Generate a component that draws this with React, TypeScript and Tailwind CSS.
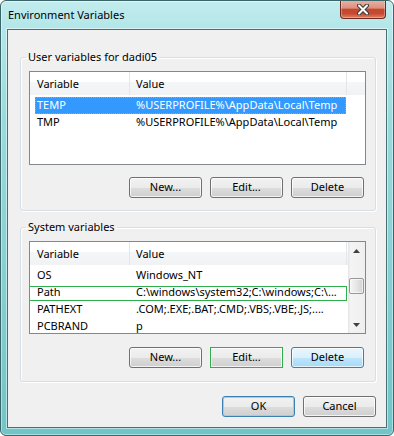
import React from "react";

type Row = { name: string; value: string; selected?: boolean; marked?: boolean };

const userRows: Row[] = [
  { name: "TEMP", value: "%USERPROFILE%\\AppData\\Local\\Temp", selected: true },
  { name: "TMP", value: "%USERPROFILE%\\AppData\\Local\\Temp" },
];

const systemRows: Row[] = [
  { name: "OS", value: "Windows_NT" },
  { name: "Path", value: "C:\\windows\\system32;C:\\windows;C:\\...", marked: true },
  { name: "PATHEXT", value: ".COM;.EXE;.BAT;.CMD;.VBS;.VBE;.JS;...." },
  { name: "PCBRAND", value: "p" },
];

const gray = "bg-[linear-gradient(to_bottom,#f2f2f2_0%,#ebebeb_50%,#dddddd_50%,#cfcfcf_100%)]";

const buttonKinds = {
  normal: `border-[#707070] ${gray} shadow-[inset_0_0_0_1px_rgba(255,255,255,0.75)]`,
  hover:
    "border-[#3c7fb1] bg-[linear-gradient(to_bottom,#eaf6fd_0%,#d9f0fc_50%,#bee6fd_50%,#a7d9f5_100%)] shadow-[inset_0_0_0_1px_rgba(255,255,255,0.7)]",
  primary: `border-[#3c7fb1] ${gray} shadow-[inset_0_0_0_1px_#7fdcf7]`,
  marked: `rounded-none border-[#2faf4c] ${gray} shadow-[inset_0_0_0_1px_rgba(255,255,255,0.75)]`,
};

function Button({ label, kind = "normal" }: { label: string; kind?: keyof typeof buttonKinds }) {
  return (
    <div
      className={`flex h-[21px] w-[73px] items-center justify-center rounded-[3px] border text-black ${buttonKinds[kind]}`}
    >
      {label}
    </div>
  );
}

function ScrollBar() {
  return (
    <div className="flex w-[17px] shrink-0 flex-col bg-[linear-gradient(to_right,#e4e4e4_0%,#f4f4f4_15%,#efefef_100%)]">
      <div className="flex h-[17px] items-center justify-center">
        <svg width="7" height="4" viewBox="0 0 7 4">
          <path d="M3.5 0 L7 4 L0 4 Z" fill="#404040" />
        </svg>
      </div>
      <div className="flex-1">
        <div className="mx-px mt-[19px] h-[16px] rounded-[2px] border border-[#979797] bg-[linear-gradient(to_right,#f6f6f6_0%,#e6e6e6_50%,#d2d2d2_100%)] shadow-[inset_0_0_0_1px_rgba(255,255,255,0.6)]" />
      </div>
      <div className="flex h-[17px] items-center justify-center">
        <svg width="7" height="4" viewBox="0 0 7 4">
          <path d="M0 0 L7 0 L3.5 4 Z" fill="#404040" />
        </svg>
      </div>
    </div>
  );
}

function ListView({ rows, scroll, h }: { rows: Row[]; scroll?: boolean; h: string }) {
  return (
    <div className={`ml-[3px] mt-[7px] flex w-[337px] border border-[#828790] bg-white ${h}`}>
      <div className="flex min-w-0 flex-1 flex-col overflow-hidden">
        <div className="flex h-[23px] shrink-0 bg-[linear-gradient(to_bottom,#ffffff_0%,#ffffff_45%,#f5f6f7_45%,#f1f2f4_100%)]">
          <div className="flex w-[100px] shrink-0 items-center border-r border-[#e3e6ea] pl-[7px] pt-[2px]">
            Variable
          </div>
          <div className="flex w-[217px] shrink-0 items-center border-r border-[#e3e6ea] pl-[6px] pt-[2px]">
            Value
          </div>
          <div className="flex-1" />
        </div>
        <div className="pt-[2px]">
          {rows.map((r) => (
            <div
              key={r.name}
              className={`relative ml-[5px] flex h-[17px] w-[311px] items-center border ${
                r.selected ? "border-dotted border-[#d9994a] bg-[#3399ff] text-white" : "border-transparent text-black"
              }`}
            >
              <div className="w-[95px] shrink-0 pl-px">{r.name}</div>
              <div className="min-w-0 flex-1 overflow-hidden whitespace-nowrap pl-[5px]">{r.value}</div>
              {r.marked && (
                <span className="absolute left-[-7px] top-px h-[15px] w-[318px] border border-[#2faf4c]" />
              )}
            </div>
          ))}
        </div>
      </div>
      {scroll && <ScrollBar />}
    </div>
  );
}

function Group({ title, children, className }: { title: string; children: React.ReactNode; className: string }) {
  return (
    <fieldset
      className={`ml-[12px] w-[356px] rounded-[3px] border border-[#d5dfe5] px-[5px] shadow-[inset_1px_1px_0_#ffffff,1px_1px_0_#ffffff] ${className}`}
    >
      <legend className="px-[2px] leading-[14px] text-black">{title}</legend>
      {children}
    </fieldset>
  );
}

export default function App() {
  return (
    <div className="flex h-[436px] w-[394px] flex-col overflow-hidden rounded-[6px] border border-[#3b6669] bg-[linear-gradient(to_bottom,#c3ecee_0px,#b2e6e8_28px,#99dadd_120px,#82ced1_300px,#70c4c7_436px)] px-[6px] pb-[7px] font-['Noto_Sans',sans-serif] text-[11px] shadow-[inset_0_0_0_1px_rgba(255,255,255,0.45)]">
      <div className="flex h-[28px] shrink-0">
        <div className="pl-px pt-[7px] leading-[14px] text-black">Environment Variables</div>
        <div className="ml-auto mr-px -mt-px flex h-[19px] w-[46px] items-center justify-center rounded-b-[4px] border border-t-0 border-[#6b2a20] bg-[linear-gradient(to_bottom,#ebb3a5_0%,#dc907e_45%,#c5472f_52%,#c54a31_75%,#e0805f_100%)] shadow-[inset_0_0_0_1px_rgba(255,255,255,0.3)]">
          <svg width="12" height="11" viewBox="0 0 12 11">
            <path d="M2 1.5 L10 9.5 M10 1.5 L2 9.5" stroke="#3c3c3c" strokeWidth="4" strokeLinecap="round" />
            <path d="M2 1.5 L10 9.5 M10 1.5 L2 9.5" stroke="#ffffff" strokeWidth="2" strokeLinecap="round" />
          </svg>
        </div>
      </div>

      <div className="flex flex-1 flex-col border border-[#4a6f72] bg-[#f0f0f0] shadow-[0_0_0_1px_rgba(255,255,255,0.5)]">
        <Group title="User variables for dadi05" className="mt-[20px] pb-[12px]">
          <ListView rows={userRows} h="h-[94px]" />
          <div className="mt-[12px] flex justify-end gap-[8px] pr-[6px]">
            <Button label="New..." />
            <Button label="Edit..." />
            <Button label="Delete" />
          </div>
        </Group>

        <Group title="System variables" className="mt-[9px] pb-[13px]">
          <ListView rows={systemRows} scroll h="h-[93px]" />
          <div className="mt-[13px] flex justify-end gap-[8px] pr-[6px]">
            <Button label="New..." />
            <Button label="Edit..." kind="marked" />
            <Button label="Delete" kind="hover" />
          </div>
        </Group>

        <div className="mr-[10px] mt-[14px] flex justify-end gap-[8px]">
          <Button label="OK" kind="primary" />
          <Button label="Cancel" />
        </div>
      </div>
    </div>
  );
}
